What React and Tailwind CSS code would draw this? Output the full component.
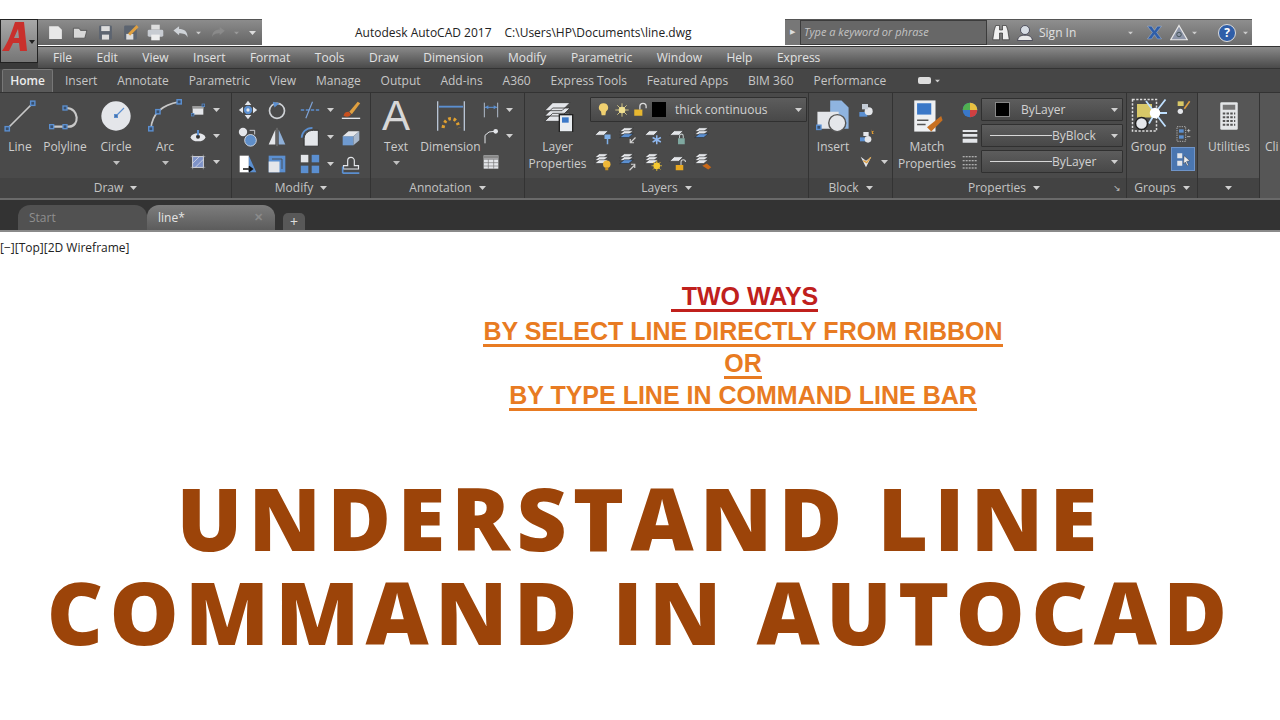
const BLUE = '#5b8fd0';
const LIGHT = '#e4e6ea';

// tiny svg wrapper, s = rendered size in px (viewBox is always 24)
const Ic = ({ s = 18, children }) => (
  <svg width={s} height={s} viewBox="0 0 24 24" fill="none" className="shrink-0">
    {children}
  </svg>
);

const Node = ({ x, y, r = 1.5 }) => (
  <rect x={x - r} y={y - r} width={r * 2} height={r * 2} fill="#39506e" stroke={BLUE} strokeWidth="1" />
);

const Caret = ({ className = 'text-[#d0d0d0]' }) => (
  <svg width="7" height="4" viewBox="0 0 7 4" className={`shrink-0 ${className}`}>
    <path d="M0 0h7L3.5 4z" fill="currentColor" />
  </svg>
);

const icons = {
  line: <><path d="M3 21 21 3" stroke="#c8c8c8" strokeWidth="1.2" /><Node x={3} y={21} /><Node x={21} y={3} /></>,
  polyline: <><path d="M2 20h13c8 0 8-14-2-14" stroke="#c8c8c8" strokeWidth="1.6" /><Node x={2} y={20} /><Node x={12} y={20} /><Node x={12} y={6} /></>,
  circle: <><circle cx="12" cy="12" r="11" fill={LIGHT} /><path d="M12 12 18 6" stroke={BLUE} strokeWidth="0.8" /><Node x={12} y={12} r={1} /></>,
  arc: <><path d="M2 21C3 10 10 4 22 2" stroke="#c8c8c8" strokeWidth="1.2" /><Node x={2} y={21} /><Node x={7} y={9} /><Node x={22} y={2} /></>,
  rect: <><rect x="4" y="6" width="16" height="13" fill={LIGHT} /><path d="M4 6h16v4H4z" fill="#9a9a9a" /><Node x={4} y={19} r={2} /><Node x={20} y={5} r={2} /></>,
  hatch: <><ellipse cx="12" cy="14" rx="11" ry="6" fill={LIGHT} /><circle cx="12" cy="13" r="3" fill="#333" /><path d="M12 3v8" stroke={BLUE} strokeWidth="3" /></>,
  boundary: <><rect x="4" y="4" width="16" height="16" fill="#7f93c8" stroke={LIGHT} /><path d="M4 14 14 4M8 20 20 8" stroke={LIGHT} /><path d="M1 4h22M1 20h22M4 1v22M20 1v22" stroke={LIGHT} strokeWidth=".6" /></>,
  move: <><path d="M12 1 16 6H8zM12 23l4-5H8zM1 12l5-4v8zM23 12l-5-4v8z" fill={LIGHT} /><circle cx="12" cy="12" r="5" fill={BLUE} /><circle cx="12" cy="12" r="2" fill={LIGHT} /></>,
  rotate: <><circle cx="12" cy="13" r="9" stroke="#cfd2d6" strokeWidth="2" /><path d="M7 2l8 2-6 5z" fill={BLUE} /></>,
  trim: <><path d="M1 12h22" stroke={BLUE} strokeWidth="1.6" strokeDasharray="4 2" /><path d="M7 22 15 2" stroke="#7fa4d8" strokeWidth="1.4" /></>,
  erase: <><path d="M1 22h22" stroke={LIGHT} strokeWidth="1.6" /><path d="M10 14 20 2l3 2-10 13z" fill="#e0a040" /><path d="M3 19c1-4 3-5 6-5l3 3c-1 3-5 4-9 2z" fill="#c8501e" /></>,
  copy: <><circle cx="6" cy="6" r="5" fill={LIGHT} /><circle cx="15" cy="16" r="7" fill="#5f8ec8" stroke={LIGHT} /><path d="M14 4h6v5" stroke={LIGHT} /></>,
  mirror: <><path d="M10 3v18H2z" fill={LIGHT} /><path d="M14 3v18h8z" fill="#8fb0d8" /><path d="M12 1v22" stroke="#888" /></>,
  fillet: <><path d="M5 23V14C5 8 10 4 16 4h6v19z" fill={LIGHT} stroke="#222" /><path d="M2 13C2 7 7 1 15 1" stroke={BLUE} strokeWidth="2" /></>,
  solid: <><path d="M2 11h13v11H2z" fill="#6f9ad0" /><path d="M2 11l7-6h13l-7 6z" fill={LIGHT} /><path d="M15 11l7-6v11l-7 6z" fill="#a9b8cc" /></>,
  stretch: <><path d="M2 2h11v20H2z" fill="#fff" /><path d="M13 2l9 20h-9z" fill={BLUE} /><path d="M6 18h10M13 15l4 3-4 3" stroke="#111" strokeWidth="2" /></>,
  scale: <><path d="M2 2h20v20H2z" fill={BLUE} /><path d="M2 9h13v13H2z" fill={LIGHT} /><path d="M6 6h12v12" stroke="#444" /></>,
  array: <><rect x="1" y="1" width="9" height="9" fill={LIGHT} /><rect x="14" y="1" width="9" height="9" fill={BLUE} /><rect x="1" y="14" width="9" height="9" fill={BLUE} /><rect x="14" y="14" width="9" height="9" fill={BLUE} /></>,
  offset: <><path d="M3 18h18v-4h-5V8a4 4 0 0 0-8 0v6H3z" stroke={LIGHT} strokeWidth="1.4" /><path d="M2 23h20M2 15v8" stroke={BLUE} strokeWidth="2" /></>,
  dimLinear: <><path d="M2 1v22M22 1v22" stroke="#b8c4d4" strokeWidth="1.4" /><path d="M3 8h18" stroke={BLUE} strokeWidth="1.6" /><path d="M3 8l5-3v6zM21 8l-5-3v6z" fill={BLUE} /></>,
  leader: <><path d="M3 23V11l6-5 8-1" stroke={LIGHT} strokeWidth="1.5" /><circle cx="19" cy="5" r="3.5" fill={LIGHT} /></>,
  table: <><rect x="1" y="2" width="22" height="20" fill={LIGHT} /><path d="M1 8h22M1 13h22M1 18h22M8 8v14M16 8v14" stroke="#777" /><rect x="1" y="2" width="22" height="5" fill="#888" /></>,
  insA: <><path d="M2 15h12v7H2z" fill={BLUE} /><circle cx="16" cy="14" r="6" fill={LIGHT} /><rect x="6" y="3" width="9" height="8" fill="#c4ccd6" /></>,
  insB: <><path d="M3 14h11v6H3z" fill={BLUE} /><circle cx="15" cy="17" r="5" fill={LIGHT} /><path d="M8 6h8v6H8z" fill={LIGHT} /><path d="M20 2l1 3 3-1-2 3 2 2h-3z" fill="#e8a030" /></>,
  insC: <><path d="M4 4l8 16 8-16-8 6z" fill={LIGHT} /><path d="M8 10l5 3 6-8" stroke="#e0a040" strokeWidth="2" /></>,
  palette: <><circle cx="12" cy="12" r="11" fill="#3a78c8" /><path d="M12 12V1a11 11 0 0 1 11 11z" fill="#e8c040" /><path d="M12 12h11a11 11 0 0 1-11 11z" fill="#d04040" /><path d="M12 12 1 12A11 11 0 0 1 12 1z" fill="#50b050" /></>,
  weights: <><path d="M1 3h22v3H1zM1 9h22v4H1zM1 16h22v6H1z" fill={LIGHT} /></>,
  linetype: <><path d="M1 4h22M1 10h22M1 16h22M1 21h22" stroke="#cfcfcf" strokeWidth="1.6" strokeDasharray="3 1.5" /></>,
  select: <><rect x="2" y="2" width="8" height="8" fill={LIGHT} /><rect x="2" y="14" width="8" height="8" fill={LIGHT} /><path d="M13 6l9 8-5 1 3 6-2 1-3-6-3 3z" fill="#eee" stroke="#222" strokeWidth=".6" /></>,
  editGroup: <><rect x="4" y="2" width="9" height="7" fill="#d8c868" /><circle cx="8" cy="17" r="4" fill={LIGHT} /><path d="M14 13 22 2" stroke="#e0a040" strokeWidth="2.4" /></>,
  groupAdd: <><rect x="3" y="1" width="13" height="22" stroke="#ddd" strokeDasharray="2 1.5" /><rect x="6" y="5" width="7" height="5" fill={BLUE} /><rect x="6" y="14" width="7" height="5" fill={BLUE} /><path d="M18 7h5M20.500 4.500v5M18 16h5" stroke="#ddd" /></>,
};

const Icon = ({ name, s = 16 }) => <Ic s={s}>{icons[name]}</Ic>;

// little badges that sit on the layer tool icons
const badges = {
  pin: <path d="M14 10h8v6h-3v7h-2v-7h-3z" fill="#7fb0e8" />,
  bulb: <><circle cx="17" cy="15" r="5" fill="#f0b838" /><path d="M15 19h4v4h-4z" fill="#c89020" /></>,
  down: <path d="M22 14 15 21M15 16v5h5" stroke="#d0d0d0" strokeWidth="1.6" />,
  up: <path d="M14 23 21 16M16 15h5v5" stroke="#d0d0d0" strokeWidth="1.6" />,
  snow: <path d="M17 11v12M11.500 14l11 6M11.500 20l11-6" stroke="#8fb8f0" strokeWidth="2" />,
  sun: <><circle cx="17" cy="17" r="4.500" fill="#f4c830" /><path d="M17 10v14M10 17h14M12 12l10 10M22 12 12 22" stroke="#f4c830" /></>,
  lock: <><rect x="12" y="15" width="9" height="8" fill="#7fa8a0" /><path d="M14 15v-3a2.500 2.500 0 0 1 5 0v3" stroke="#c0c8c8" strokeWidth="1.4" /></>,
  open: <><rect x="9" y="16" width="10" height="7" fill="#e8a820" /><path d="M16 16v-4a3 3 0 0 1 6 0" stroke="#d0d0d0" strokeWidth="1.4" /></>,
  brush: <path d="M11 17l6-3 6 5-4 3z" fill="#c86818" />,
  none: null,
};

const LayerTool = ({ stack, badge, tint }) => (
  <Ic s={18}>
    {stack ? (
      <>
        <path d="M1 6 7 1h12l-6 5z" fill={LIGHT} stroke="#222" strokeWidth=".7" />
        <path d="M1 10 7 5h12l-6 5z" fill={LIGHT} stroke="#222" strokeWidth=".7" />
        <path d="M1 14 7 9h12l-6 5z" fill={tint || LIGHT} stroke="#222" strokeWidth=".7" />
      </>
    ) : (
      <path d="M1 11 7 5h12l-6 6z" fill={LIGHT} stroke="#222" strokeWidth=".7" />
    )}
    {badges[badge]}
  </Ic>
);

const Large = ({ w, label, caret, children, className = '' }) => (
  <div className={`flex shrink-0 flex-col items-center ${className}`} style={{ width: w }}>
    <div className="flex h-[44px] items-center justify-center">{children}</div>
    <div className="text-center text-[12px] leading-[17px] text-[#cdcdcd]">{label}</div>
    {caret && <Caret className="mt-[6px] text-[#c0c0c0]" />}
  </div>
);

const Small = ({ name, caret, s = 16, className = '' }) => (
  <div className={`flex h-[26px] items-center gap-[7px] ${className}`}>
    <Icon name={name} s={s} />
    {caret && <Caret />}
  </div>
);

const Panel = ({ w, label, arrow, corner, children, className = 'bg-[#4a4a4a]' }) => (
  <div className={`flex shrink-0 flex-col border-r border-[#333] ${className}`} style={{ width: w }}>
    <div className="flex h-[86px] pt-[1px]">{children}</div>
    <div className="flex h-[20px] items-center justify-center gap-[7px] bg-[#434343] text-[12px] text-[#c4c4c4]">
      {label && <span>{label}</span>}
      {arrow && <Caret />}
      {corner && <span className="ml-[66px] -mr-[70px] text-[9px] text-[#c0c0c0]">↘</span>}
    </div>
  </div>
);

const Combo = ({ children, className = 'h-[23px]' }) => (
  <div className={`flex items-center rounded-[1px] border border-[#303030] bg-gradient-to-b from-[#5d5d5d] to-[#484848] pr-[4px] text-[12px] text-[#d2d2d2] ${className}`}>
    <div className="flex min-w-0 flex-1 items-center">{children}</div>
    <Caret />
  </div>
);

const LineCombo = ({ label }) => (
  <Combo>
    <span className="ml-[8px] h-px w-[62px] bg-[#d8d8d8]" />
    <span>{label}</span>
  </Combo>
);

const menu = ['File', 'Edit', 'View', 'Insert', 'Format', 'Tools', 'Draw', 'Dimension', 'Modify', 'Parametric', 'Window', 'Help', 'Express'];
const tabs = ['Insert', 'Annotate', 'Parametric', 'View', 'Manage', 'Output', 'Add-ins', 'A360', 'Express Tools', 'Featured Apps', 'BIM 360', 'Performance'];

const Underlined = ({ className, children }) => (
  <div className={`border-b-[3px] leading-[25px] ${className}`}>{children}</div>
);

export default function App() {
  return (
    <div className="h-[720px] w-[1280px] overflow-hidden bg-white font-['Open_Sans',sans-serif]">
      {/* title + menu */}
      <div className="flex h-[69px]">
        <div className="flex w-[38px] shrink-0 flex-col bg-white pt-[19px]">
          <div className="h-[44px] border border-[#222] bg-gradient-to-b from-[#a8a8a8] to-[#767676]">
            <svg width="36" height="42" viewBox="0 0 36 42">
              <path fillRule="evenodd" d="M1 31C7 23 11 11 14 2h9l3 29h-7l-1-8h-6l-4 8zM13 18h5l-1-9z" fill="#c9302c" />
              <path d="M28 20h6l-3 4z" fill="#222" />
            </svg>
          </div>
          <div className="h-[6px] bg-[#3a3a3a]" />
        </div>
        <div className="flex min-w-0 flex-1 flex-col">
          <div className="flex h-[46px] items-end pb-px">
            <div className="flex h-[26px] w-[224px] items-center border-t border-[#555] bg-gradient-to-b from-[#8c8c8c] to-[#646464] pl-[9px]">
              <div className="flex items-center gap-[8px]">
                {[
                  <path key="n" d="M3 3h13l5 5v13H3z" fill="#e8e8e8" />,
                  <path key="o" d="M2 6h8l2 3h9l-3 11H2z" fill="#d8d8d8" stroke="#444" />,
                  <g key="s"><rect x="3" y="2" width="18" height="20" rx="2" fill="#5c6470" /><rect x="6" y="3" width="12" height="7" fill="#ddd" /><rect x="7" y="15" width="10" height="7" fill="#ddd" /></g>,
                  <g key="a"><rect x="3" y="2" width="18" height="20" rx="2" fill="#5c6470" /><rect x="6" y="14" width="10" height="8" fill="#ddd" /><path d="M10 15 22 3" stroke="#e0a040" strokeWidth="4" /></g>,
                  <g key="p"><rect x="6" y="1" width="12" height="7" fill="#ddd" /><rect x="1" y="8" width="22" height="10" rx="2" fill="#c8ccd2" /><rect x="6" y="15" width="12" height="8" fill="#eee" /></g>,
                  <path key="u" d="M2 9l8-6v4c7 0 12 3 12 12-2-5-6-6-12-6v3z" fill="#cfd3d8" />,
                ].map((p, i) => <Ic key={i} s={17}>{p}</Ic>)}
              </div>
              <Caret className="ml-[6px] scale-75 text-[#ccc]" />
              <div className="ml-[9px]"><Ic s={15}><path d="M22 9l-8-6v4C7 7 2 10 2 19c2-5 6-6 12-6v3z" fill="#8a8a8a" /></Ic></div>
              <Caret className="ml-[7px] scale-75 text-[#999]" />
              <Caret className="ml-[9px] text-[#ddd]" />
            </div>
            <div className="ml-[93px] w-[400px] self-center pt-[20px] text-[12px] leading-none text-[#222]">
              <span>Autodesk AutoCAD 2017</span>
              <span className="ml-[13px]">C:\Users\HP\Documents\line.dwg</span>
            </div>
            <div className="ml-[30px] flex h-[26px] w-[467px] items-center border-t border-[#555] bg-gradient-to-b from-[#8e8e8e] to-[#6a6a6a] text-[12px]">
              <div className="flex h-full w-[15px] items-center justify-center bg-[#777] text-[7px] text-[#ddd]">▶</div>
              <div className="flex h-[25px] w-[187px] items-center border border-[#3c3c3c] bg-[#676767] pl-[3px] text-[11px] italic text-[#c4c4c4]">Type a keyword or phrase</div>
              <div className="ml-[5px]"><Ic s={18}><path d="M3 8 5 2h5v6h4V2h5l2 6 2 13h-9V12h-4v9H1z" fill="#f0f0f0" stroke="#222" strokeWidth=".8" /></Ic></div>
              <div className="ml-[6px]"><Ic s={18}><circle cx="12" cy="8" r="6" fill="#d8dde4" stroke="#334" /><path d="M2 22c1-6 5-7 10-7s9 1 10 7z" fill="#e8e8e8" stroke="#334" /></Ic></div>
              <span className="ml-[5px] w-[88px] text-[#e0e0e0]">Sign In</span>
              <Caret className="scale-75 text-[#ccc]" />
              <div className="ml-[12px]"><Ic s={17}><path d="M2 3h6l4 6 4-6h6l-7 9 7 9h-6l-4-6-4 6H2l7-9z" fill="#2f5ea8" stroke="#b8c8e0" strokeWidth=".6" /></Ic></div>
              <div className="ml-[7px]"><Ic s={18}><path d="M12 2 23 21H1z" fill="#8d95a8" stroke="#e8e8e8" strokeWidth="1.6" /><circle cx="12" cy="14" r="3" stroke="#344" /></Ic></div>
              <Caret className="ml-[3px] scale-75 text-[#ccc]" />
              <div className="ml-[20px] flex h-[18px] w-[18px] items-center justify-center rounded-full border border-[#ddd] bg-[#2f5ea8] text-[12px] font-bold leading-none text-white">?</div>
              <Caret className="ml-[6px] scale-75 text-[#ccc]" />
            </div>
          </div>
          <div className="flex h-[23px] items-center gap-[24.5px] border-y border-[#333] bg-gradient-to-b from-[#8a8a8a] to-[#4a4a4a] pl-[15px] text-[12px] text-[#e2e2e2]">
            {menu.map((m) => <span key={m}>{m}</span>)}
          </div>
        </div>
      </div>

      {/* ribbon tabs */}
      <div className="flex h-[23px] items-end gap-[12px] bg-[#464646] pl-[2px] text-[12px] text-[#c6c6c6]">
        <div className="flex h-[23px] w-[51px] items-center justify-center rounded-t-[2px] border-x border-t border-[#777] bg-[#5a5a5a] font-semibold text-[#ececec]">Home</div>
        <div className="flex h-[23px] items-center gap-[19.9px]">
          {tabs.map((t) => <span key={t}>{t}</span>)}
          <span className="ml-[12px] flex items-center gap-[3px]">
            <span className="h-[7px] w-[13px] rounded-[2px] bg-[#ddd]" />
            <Caret className="scale-75 text-[#ccc]" />
          </span>
        </div>
      </div>

      {/* ribbon */}
      <div className="flex h-[108px] border-t border-[#333] border-b-2 border-b-[#6a6a6a] bg-[#4a4a4a]">
        <Panel w={232} label="Draw" arrow>
          <Large w={40} label="Line"><Icon name="line" s={34} /></Large>
          <Large w={50} label="Polyline"><Icon name="polyline" s={32} /></Large>
          <Large w={52} label="Circle" caret><Icon name="circle" s={32} /></Large>
          <Large w={46} label="Arc" caret><Icon name="arc" s={34} /></Large>
          <div className="flex flex-col pl-[2px] pt-[3px]">
            <Small name="rect" caret />
            <Small name="hatch" caret />
            <Small name="boundary" caret />
          </div>
        </Panel>

        <Panel w={139} label="Modify" arrow>
          <div className="grid grid-cols-[29px_33px_41px_auto] pl-[6px] pt-[3px]">
            <Small name="move" s={20} /><Small name="rotate" s={20} /><Small name="trim" s={20} caret /><Small name="erase" s={20} />
            <Small name="copy" s={20} /><Small name="mirror" s={20} /><Small name="fillet" s={20} caret /><Small name="solid" s={20} />
            <Small name="stretch" s={20} /><Small name="scale" s={20} /><Small name="array" s={20} caret /><Small name="offset" s={20} />
          </div>
        </Panel>

        <Panel w={154} label="Annotation" arrow>
          <Large w={50} label="Text" caret>
            <span className="font-['Liberation_Sans',sans-serif] text-[42px] leading-none text-[#d8d8d8]">A</span>
          </Large>
          <Large w={59} label="Dimension">
            <Ic s={32}>
              <path d="M2 1v22M22 1v22" stroke="#b8c4d4" />
              <path d="M3 5h18" stroke={BLUE} strokeWidth="1.4" />
              <path d="M6 21c1-5 3-7 6-7s5 2 6 7" stroke="#e0a030" strokeWidth="2.4" strokeDasharray="2 2" />
            </Ic>
          </Large>
          <div className="flex flex-col pl-[3px] pt-[3px]">
            <Small name="dimLinear" caret />
            <Small name="leader" caret />
            <Small name="table" />
          </div>
        </Panel>

        <Panel w={284} label="Layers" arrow>
          <Large w={65} label={<>Layer<br />Properties</>}>
            <Ic s={32}>
              <path d="M2 8 8 2h13l-6 6zM2 12l6-6h13l-6 6zM2 16l6-6h13l-6 6z" fill={LIGHT} stroke="#333" strokeWidth=".6" />
              <rect x="13" y="11" width="10" height="13" fill="#e8ecf0" stroke="#222" />
              <rect x="15" y="13" width="5" height="4" fill="#3a78c8" />
            </Ic>
          </Large>
          <div className="flex w-[219px] flex-col pt-[3px]">
            <Combo className="h-[25px] w-[217px]">
              <div className="ml-[5px] flex items-center gap-[3px]">
                <Ic s={15}><path d="M12 2a7 7 0 0 1 4 13l-1 6H9l-1-6a7 7 0 0 1 4-13z" fill="#f0d070" /></Ic>
                <Ic s={16}><circle cx="12" cy="12" r="5" fill="#f0e090" /><path d="M12 2v20M2 12h20M5 5l14 14M19 5 5 19" stroke="#f0e090" strokeWidth="1.2" /></Ic>
                <Ic s={15}><rect x="2" y="12" width="13" height="10" fill="#e8b830" /><path d="M11 12V7a5 5 0 0 1 10 0v3" stroke="#ddd" strokeWidth="2" /></Ic>
                <span className="ml-[1px] h-[15px] w-[14px] bg-black" />
                <span className="ml-[6px]">thick continuous</span>
              </div>
            </Combo>
            <div className="mt-[1px] flex h-[26px] items-center gap-[7px] pl-[4px]">
              <LayerTool badge="pin" />
              <LayerTool stack badge="down" tint={BLUE} />
              <LayerTool badge="snow" />
              <LayerTool badge="lock" />
              <LayerTool stack badge="none" tint={BLUE} />
            </div>
            <div className="flex h-[26px] items-center gap-[7px] pl-[4px]">
              <LayerTool stack badge="bulb" />
              <LayerTool stack badge="up" tint={BLUE} />
              <LayerTool stack badge="sun" />
              <LayerTool badge="open" />
              <LayerTool stack badge="brush" />
            </div>
          </div>
        </Panel>

        <Panel w={84} label="Block" arrow>
          <Large w={46} label="Insert" className="ml-[1px]">
            <Ic s={34}>
              <path d="M10 1h8l5 5v15H10z" fill="#8fb4e0" />
              <path d="M1 9h15v12H1z" fill={LIGHT} />
              <circle cx="15" cy="17" r="6" fill={LIGHT} stroke="#555" />
              <Node x={2} y={20} />
            </Ic>
          </Large>
          <div className="flex flex-col pl-[2px] pt-[3px]">
            <Small name="insA" />
            <Small name="insB" />
            <Small name="insC" caret />
          </div>
        </Panel>

        <Panel w={234} label="Properties" arrow corner>
          <Large w={66} label={<>Match<br />Properties</>} className="ml-[1px]">
            <Ic s={34}>
              <rect x="3" y="1" width="15" height="22" fill="#eef0f2" />
              <rect x="5" y="3" width="10" height="8" fill="#3a78c8" />
              <path d="M5 15h8M5 18h6" stroke="#555" />
              <path d="M12 20 22 12l1 3-8 8z" fill="#c87020" />
            </Ic>
          </Large>
          <div className="flex w-[20px] flex-col items-center pt-[3px]">
            <Small name="palette" />
            <Small name="weights" />
            <Small name="linetype" />
          </div>
          <div className="ml-px flex w-[142px] flex-col gap-[3px] pt-[4px]">
            <Combo>
              <span className="ml-[13px] h-[15px] w-[15px] border border-[#888] bg-black" />
              <span className="ml-[11px]">ByLayer</span>
            </Combo>
            <LineCombo label="ByBlock" />
            <LineCombo label="ByLayer" />
          </div>
        </Panel>

        <Panel w={71} label="Groups" arrow>
          <Large w={43} label="Group">
            <Ic s={36}>
              <rect x="1" y="1" width="16" height="21" stroke="#ddd" strokeDasharray="1.500 1" />
              <rect x="4" y="4" width="10" height="9" fill="#d8c868" />
              <circle cx="7" cy="17" r="4" fill={LIGHT} stroke="#222" />
              <path d="M16 10 23 1M16 10 23 19M16 10H24M16 10 10 2M16 10 12 17" stroke="#bfe0ff" strokeWidth="1.2" />
              <circle cx="16" cy="10" r="3.500" fill="#fff" />
            </Ic>
          </Large>
          <div className="flex flex-col pl-[1px] pt-[1px]">
            <Small name="editGroup" className="pl-[4px]" />
            <Small name="groupAdd" className="pl-[4px]" />
            <div className="flex h-[24px] w-[24px] items-center justify-center border border-[#6f94c8] bg-[#4a76b0]">
              <Icon name="select" s={15} />
            </div>
          </div>
        </Panel>

        <Panel w={62} arrow className="bg-[#565656]">
          <Large w={62} label="Utilities">
            <Ic s={30}>
              <rect x="5" y="1" width="14" height="22" rx="1" fill="#e4e6e8" />
              <rect x="7" y="3" width="10" height="4" fill="#777" />
              <path d="M7 10h10M7 13h10M7 16h10M7 19h10" stroke="#555" strokeWidth="1.500" strokeDasharray="2 1" />
            </Ic>
          </Large>
        </Panel>

        <div className="flex-1 bg-[#565656] pl-[5px] pt-[45px] text-[12px] leading-[17px] text-[#cdcdcd]">Cli</div>
      </div>

      {/* drawing tabs */}
      <div className="flex h-[32px] items-end border-b-[2px] border-b-[#8a8a8a] bg-[#333] pl-[18px] text-[12px]">
        <div className="flex h-[25px] w-[129px] items-center rounded-t-[12px] bg-[#515151] pl-[11px] text-[#8f8f8f]">Start</div>
        <div className="flex h-[25px] w-[128px] items-center justify-between rounded-t-[12px] bg-gradient-to-b from-[#7d7d7d] to-[#5c5c5c] pl-[11px] pr-[12px] text-[#e4e4e4]">
          <span>line*</span>
          <span className="text-[11px] font-bold text-[#8a8a8a]">✕</span>
        </div>
        <div className="ml-[8px] flex h-[17px] w-[22px] items-center justify-center rounded-t-[5px] bg-[#585858] text-[14px] leading-none text-[#ddd]">+</div>
      </div>

      {/* viewport */}
      <div className="h-[8px]" />
      <div className="text-[12px] leading-[16px] text-[#222]">[−][Top][2D Wireframe]</div>

      <div className="flex flex-col items-center pl-[206px] pt-[28px] font-['Liberation_Sans',sans-serif] text-[25px] font-bold">
        <Underlined className="ml-[3px] border-[#c0201c] text-[#c0201c]"><span className="inline-block w-[11px]">&nbsp;</span>TWO WAYS</Underlined>
        <Underlined className="mt-[7px] border-[#e87b22] text-[#e87b22]">BY SELECT LINE DIRECTLY FROM RIBBON</Underlined>
        <Underlined className="mt-[4px] border-[#e87b22] text-[#e87b22]">OR</Underlined>
        <Underlined className="mt-[4px] border-[#e87b22] text-[#e87b22]">BY TYPE LINE IN COMMAND LINE BAR</Underlined>
      </div>

      <div className="mt-[59px] text-center text-[87px] font-extrabold leading-[94px] tracking-[6.2px] text-[#9c4409]">
        <div>UNDERSTAND LINE</div>
        <div>COMMAND IN AUTOCAD</div>
      </div>
    </div>
  );
}
